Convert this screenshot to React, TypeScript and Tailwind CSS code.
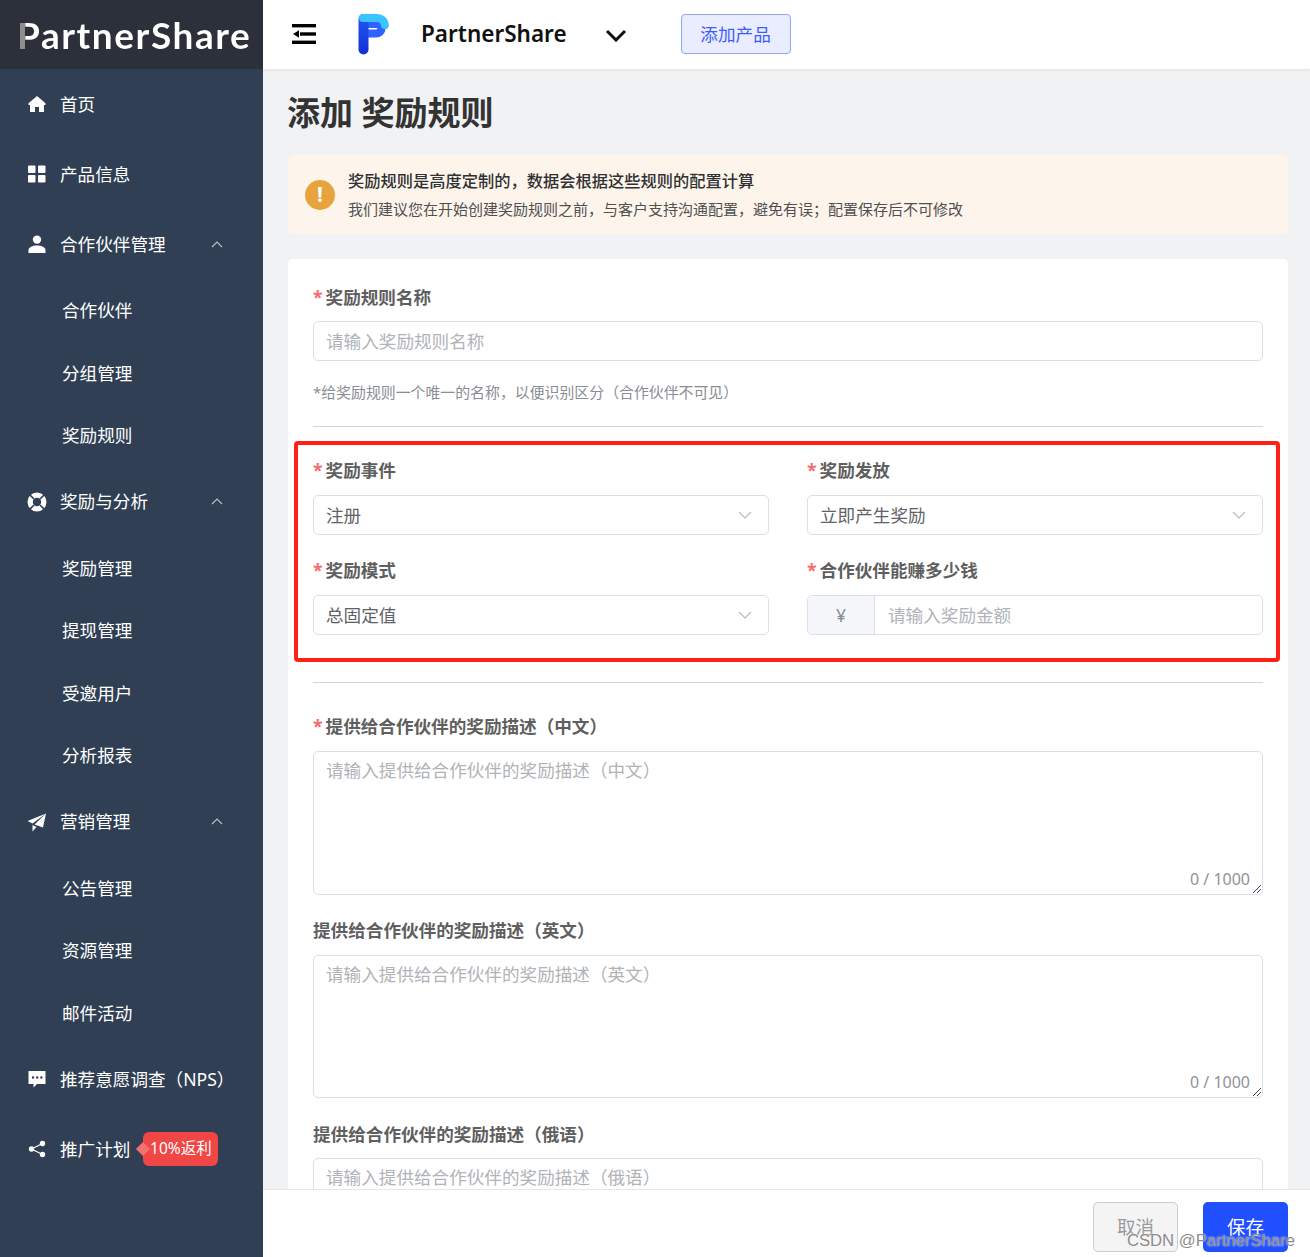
import React from "react";

const font = { fontFamily: '"Noto Sans", "Noto Sans CJK SC", sans-serif' };

const Up = () => (
  <svg width="12" height="8" viewBox="0 0 12 8" fill="none" stroke="#b9c1cc" strokeWidth="1.2" className="ml-auto mr-[40px] -mt-[1px]">
    <path d="M1 7l5-5 5 5" />
  </svg>
);

const HomeIcon = () => (
  <svg width="18" height="18" viewBox="0 0 18 18" fill="#fff"><path d="M9 1L0.5 8.2V10H2V17H7V12H11V17H16V10H17.5V8.2Z" /></svg>
);
const GridIcon = () => (
  <svg width="18" height="18" viewBox="0 0 18 18" fill="#fff">
    <rect x="0" y="0.5" width="7.5" height="7.5" rx="1" /><rect x="10" y="0.5" width="7.5" height="7.5" rx="1" />
    <rect x="0" y="10" width="7.5" height="7.5" rx="1" /><rect x="10" y="10" width="7.5" height="7.5" rx="1" />
  </svg>
);
const UserIcon = () => (
  <svg width="18" height="18" viewBox="0 0 18 18" fill="#fff">
    <circle cx="9" cy="4.6" r="4.2" /><path d="M0.5 18V15.2C0.5 12.4 4.5 10.6 9 10.6S17.5 12.4 17.5 15.2V18Z" />
  </svg>
);
const RingIcon = () => (
  <svg width="20" height="20" viewBox="0 0 20 20" fill="#fff">
    <path fillRule="evenodd" d="M10 0.5a9.5 9.5 0 1 0 0 19a9.5 9.5 0 0 0 0-19ZM10 5.8a4.2 4.2 0 1 1 0 8.4a4.2 4.2 0 0 1 0-8.4Z" />
    <path d="M2.5 2.5L7 7M17.5 2.5L13 7M2.5 17.5L7 13M17.5 17.5L13 13" stroke="#303f54" strokeWidth="1.7" />
  </svg>
);
const PlaneIcon = () => (
  <svg width="20" height="20" viewBox="0 0 20 20" fill="#fff">
    <path d="M19 1.5L0.5 9L5.5 11.5L19 1.5ZM19 1.5L7.5 12.5L16 15.5ZM5.5 13V19.5L9.5 15Z" />
  </svg>
);
const ChatIcon = () => (
  <svg width="18" height="18" viewBox="0 0 18 18" fill="#fff">
    <path fillRule="evenodd" d="M0.5 1H17.5V14H9L5.5 17.5V14H0.5ZM5 6.3a1.2 1.2 0 1 0 0 2.4a1.2 1.2 0 0 0 0-2.4ZM9.2 6.3a1.2 1.2 0 1 0 0 2.4a1.2 1.2 0 0 0 0-2.4ZM13.4 6.3a1.2 1.2 0 1 0 0 2.4a1.2 1.2 0 0 0 0-2.4Z" />
  </svg>
);
const ShareIcon = () => (
  <svg width="18" height="18" viewBox="0 0 18 18" fill="#fff" stroke="#fff">
    <circle cx="3.5" cy="9" r="2.7" stroke="none" /><circle cx="14.5" cy="3.5" r="2.7" stroke="none" /><circle cx="14.5" cy="14.5" r="2.7" stroke="none" />
    <path d="M3.5 9L14.5 3.5M3.5 9L14.5 14.5" strokeWidth="1.3" />
  </svg>
);

function Top({ icon, label, chevron, children }: { icon: React.ReactNode; label: string; chevron?: boolean; children?: React.ReactNode }) {
  return (
    <div className="flex h-[70px] items-center pl-[26px] text-[17.6px] text-white">
      <span className="flex w-[21px] justify-center">{icon}</span>
      <span className="ml-[13px] whitespace-nowrap">{label}</span>
      {children}
      {chevron && <Up />}
    </div>
  );
}
const Sub = ({ label }: { label: string }) => (
  <div className="flex h-[62.5px] items-center pl-[62px] text-[17.6px] text-white">{label}</div>
);

const Label = ({ text, required }: { text: string; required?: boolean }) => (
  <div className="flex h-[26px] items-center text-[17.6px] font-bold leading-[26px] text-[#5f5f5f]">
    {required && <span className="mr-[3px] text-[#f56c6c]">*</span>}
    {text}
  </div>
);

const Select = ({ value }: { value: string }) => (
  <div className="flex h-[40px] items-center justify-between rounded-[5px] border border-[#dcdfe6] bg-white pl-[12px] pr-[16px] text-[17.6px] text-[#606266]">
    <span>{value}</span>
    <svg width="14" height="8" viewBox="0 0 14 8" fill="none" stroke="#b4b7bd" strokeWidth="1.1"><path d="M1 1l6 6 6-6" /></svg>
  </div>
);

const Area = ({ placeholder, h }: { placeholder: string; h: string }) => (
  <div className={`relative rounded-[5px] border border-[#dcdfe6] bg-white px-[12px] pt-[5px] text-[17.6px] text-[#b0b3b8] ${h}`}>
    {placeholder}
    <span className="absolute bottom-[3px] right-[12px] text-[16px] text-[#909399]">0 / 1000</span>
    <svg width="10" height="10" viewBox="0 0 10 10" className="absolute bottom-0 right-0" stroke="#444" strokeWidth="1" fill="none">
      <path d="M1 9L9 1M5 9L9 5" />
    </svg>
  </div>
);

export default function App() {
  return (
    <div className="relative flex h-[1257px] w-full overflow-hidden bg-[#f1f2f4]" style={font}>
      <aside className="flex w-[263px] shrink-0 flex-col bg-[#303f54]">
        <div className="flex h-[69px] items-center bg-[#2b303b] pl-[17px]">
          <span className="bg-[linear-gradient(90deg,#8f8f8f_0,#8f8f8f_8px,#ffffff_9px)] bg-clip-text text-[37px] font-bold leading-none tracking-[1.55px] text-transparent" style={{ fontFamily: "Lato, sans-serif" }}>
            PartnerShare
          </span>
        </div>
        <Top icon={<HomeIcon />} label="首页" />
        <Top icon={<GridIcon />} label="产品信息" />
        <Top icon={<UserIcon />} label="合作伙伴管理" chevron />
        <Sub label="合作伙伴" />
        <Sub label="分组管理" />
        <Sub label="奖励规则" />
        <Top icon={<RingIcon />} label="奖励与分析" chevron />
        <Sub label="奖励管理" />
        <Sub label="提现管理" />
        <Sub label="受邀用户" />
        <Sub label="分析报表" />
        <Top icon={<PlaneIcon />} label="营销管理" chevron />
        <Sub label="公告管理" />
        <Sub label="资源管理" />
        <Sub label="邮件活动" />
        <Top icon={<ChatIcon />} label="推荐意愿调查（NPS）" />
        <Top icon={<ShareIcon />} label="推广计划">
          <span className="relative ml-[13px] flex h-[34px] w-[75px] items-center justify-center rounded-[6px] bg-[#f04646] text-[15.5px] text-white">
            <span className="absolute -left-[5px] top-[12px] h-[10px] w-[10px] rotate-45 bg-[#f56f6f]" />
            <span className="relative">10%返利</span>
          </span>
        </Top>
      </aside>

      <main className="flex min-w-0 flex-1 flex-col">
        <header className="z-10 flex h-[69px] shrink-0 items-center bg-white pb-[1px] pl-[29px] shadow-[0_1px_3px_rgba(0,0,0,0.08)]">
          <svg width="24" height="20" viewBox="0 0 24 20" fill="#000">
            <rect width="24" height="3.4" /><rect x="8" y="8.3" width="16" height="3.4" /><rect y="16.6" width="24" height="3.4" />
            <path d="M1 10L7 6.2V13.8Z" />
          </svg>
          <svg width="31" height="42" viewBox="0 0 31 42" className="ml-[42px]" fill="none">
            <defs>
              <linearGradient id="stem" gradientUnits="userSpaceOnUse" x1="0" y1="5" x2="0" y2="41">
                <stop offset="0" stopColor="#1f55ee" /><stop offset="1" stopColor="#1430d4" />
              </linearGradient>
            </defs>
            <path d="M7 11H18C21.5 11 23.5 13 23.5 15.5S21.5 20.5 18 20.5H8" stroke="#2f63ff" strokeWidth="8" strokeLinecap="round" />
            <path d="M5.5 6V36.5" stroke="url(#stem)" strokeWidth="10" strokeLinecap="round" />
            <path d="M5 5H18.5C23.5 5 26.5 8 26.8 12" stroke="#39c3ff" strokeWidth="8" strokeLinecap="round" />
          </svg>
          <span className="ml-[32px] text-[22.5px] font-semibold text-[#111]">PartnerShare</span>
          <svg width="22" height="13" viewBox="0 0 22 13" fill="none" stroke="#111" strokeWidth="3" className="ml-[38px] mt-[2px]"><path d="M2 2l9 9 9-9" /></svg>
          <button className="ml-[54px] h-[40px] w-[110px] rounded-[4px] border border-[#8ea6ff] bg-[#e9edff] text-[17.6px] text-[#3d5cff]">添加产品</button>
        </header>

        <div className="min-h-0 flex-1 overflow-hidden pl-[25px] pr-[22px]">
          <h1 className="-ml-[1px] mt-[20px] h-[48px] text-[33px] font-bold leading-[48px] text-[#333]">添加 奖励规则</h1>
          <div className="mt-[18px] flex h-[79px] items-center rounded-[5px] bg-[#fdf5ec] pl-[17px]">
            <span className="flex h-[30px] w-[30px] items-center justify-center rounded-full bg-[#e8a33d] text-[21px] font-bold text-white">!</span>
            <div className="ml-[13px]">
              <div className="-mt-[1px] text-[16.25px] font-medium leading-[28px] text-[#303133]">奖励规则是高度定制的，数据会根据这些规则的配置计算</div>
              <div className="mt-[1px] text-[15px] leading-[26px] text-[#505050]">我们建议您在开始创建奖励规则之前，与客户支持沟通配置，避免有误；配置保存后不可修改</div>
            </div>
          </div>

          <section className="mt-[25px] rounded-t-[5px] bg-white px-[25px] pt-[25px]">
            <Label text="奖励规则名称" required />
            <div className="mt-[11px] flex h-[40px] items-center rounded-[5px] border border-[#dcdfe6] px-[12px] text-[17.6px] text-[#b0b3b8]">请输入奖励规则名称</div>
            <div className="mt-[20px] h-[22px] text-[14.9px] leading-[22px] text-[#8a8d93]">*给奖励规则一个唯一的名称，以便识别区分（合作伙伴不可见）</div>
            <div className="mt-[23px] h-px bg-[#d4d5d8]" />

            <div className="relative mt-[30px] grid grid-cols-2 gap-x-[38px] gap-y-[22px]">
              <div>
                <Label text="奖励事件" required />
                <div className="mt-[12px]"><Select value="注册" /></div>
              </div>
              <div>
                <Label text="奖励发放" required />
                <div className="mt-[12px]"><Select value="立即产生奖励" /></div>
              </div>
              <div>
                <Label text="奖励模式" required />
                <div className="mt-[12px]"><Select value="总固定值" /></div>
              </div>
              <div>
                <Label text="合作伙伴能赚多少钱" required />
                <div className="mt-[12px] flex h-[40px] rounded-[5px] border border-[#dcdfe6] text-[17.6px]">
                  <span className="flex w-[67px] items-center justify-center rounded-l-[5px] border-r border-[#dcdfe6] bg-[#f5f7fa] text-[#8a8d93]">¥</span>
                  <span className="flex items-center pl-[13px] text-[#b0b3b8]">请输入奖励金额</span>
                </div>
              </div>
              <div className="pointer-events-none absolute -bottom-[27px] -left-[19px] -right-[17px] -top-[16px] rounded-[4px] border-[4px] border-[#ff2116]" />
            </div>

            <div className="mt-[47px] h-px bg-[#d4d5d8]" />
            <div className="mt-[30px]"><Label text="提供给合作伙伴的奖励描述（中文）" required /></div>
            <div className="mt-[12px]"><Area placeholder="请输入提供给合作伙伴的奖励描述（中文）" h="h-[144px]" /></div>
            <div className="mt-[22px]"><Label text="提供给合作伙伴的奖励描述（英文）" /></div>
            <div className="mt-[12px]"><Area placeholder="请输入提供给合作伙伴的奖励描述（英文）" h="h-[143px]" /></div>
            <div className="mt-[23px]"><Label text="提供给合作伙伴的奖励描述（俄语）" /></div>
            <div className="mt-[11px] h-[140px] rounded-[5px] border border-[#dcdfe6] px-[12px] pt-[5px] text-[17.6px] text-[#b0b3b8]">请输入提供给合作伙伴的奖励描述（俄语）</div>
          </section>
        </div>

        <footer className="z-10 flex h-[68px] shrink-0 justify-end gap-[25px] border-t border-[#e6e6e6] bg-white pr-[22px] pt-[12px]">
          <button className="h-[50px] w-[85px] rounded-[5px] border border-[#cccccc] bg-[#f4f4f4] text-[18.5px] text-[#9a9a9a]">取消</button>
          <button className="h-[50px] w-[85px] rounded-[5px] bg-[#1f4fff] text-[18.5px] text-white">保存</button>
        </footer>
      </main>

      <span className="absolute bottom-[4px] right-[15px] z-20 text-[16.7px] leading-[24px] text-[#8c8c8c] [text-shadow:0_0_2px_rgba(255,255,255,0.9)]" style={{ fontFamily: '"Liberation Sans", sans-serif' }}>
        CSDN @PartnerShare
      </span>
    </div>
  );
}
